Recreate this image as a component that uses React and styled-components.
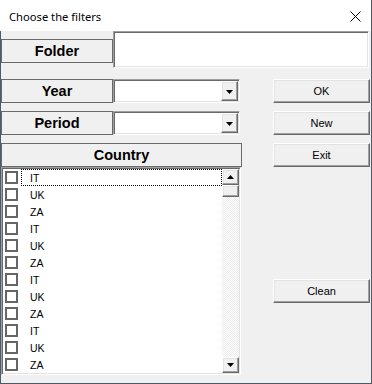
import React from "react";
import styled, { createGlobalStyle } from "styled-components";

const countries = ["IT", "UK", "ZA", "IT", "UK", "ZA", "IT", "UK", "ZA", "IT", "UK", "ZA"];

function DownArrow() {
  return (
    <svg width="7" height="4" viewBox="0 0 7 4">
      <path d="M0 0 H7 L3.5 4 Z" fill="#000" />
    </svg>
  );
}

function UpArrow() {
  return (
    <svg width="7" height="4" viewBox="0 0 7 4">
      <path d="M0 4 H7 L3.5 0 Z" fill="#000" />
    </svg>
  );
}

function CloseIcon() {
  return (
    <svg width="11" height="11" viewBox="0 0 11 11">
      <path d="M0.5 0.5 L10.5 10.5 M10.5 0.5 L0.5 10.5" stroke="#000" strokeWidth="1" fill="none" />
    </svg>
  );
}

function Combo() {
  return (
    <ComboBox>
      <DropButton>
        <DownArrow />
      </DropButton>
    </ComboBox>
  );
}

function App() {
  return (
    <>
      <GlobalStyle />
      <Window>
        <TitleBar>
          <span>Choose the filters</span>
          <CloseIcon />
        </TitleBar>
        <Client>
          <FolderRow>
            <FieldLabel>Folder</FieldLabel>
            <TextBox />
          </FolderRow>
          <Main>
            <LeftColumn>
              <FieldRow>
                <FieldLabel>Year</FieldLabel>
                <Combo />
              </FieldRow>
              <FieldRow>
                <FieldLabel>Period</FieldLabel>
                <Combo />
              </FieldRow>
              <HeaderLabel>Country</HeaderLabel>
              <ListBox>
                <Items>
                  {countries.map((c, i) => (
                    <Item key={i}>
                      <Check />
                      <ItemText focused={i === 0}>{c}</ItemText>
                    </Item>
                  ))}
                </Items>
                <ScrollBar>
                  <ScrollButton>
                    <UpArrow />
                  </ScrollButton>
                  <Thumb />
                  <Track />
                  <ScrollButton>
                    <DownArrow />
                  </ScrollButton>
                </ScrollBar>
              </ListBox>
            </LeftColumn>
            <ButtonColumn>
              <Button>OK</Button>
              <Button>New</Button>
              <Button>Exit</Button>
              <Button spaced>Clean</Button>
            </ButtonColumn>
          </Main>
        </Client>
      </Window>
    </>
  );
}

const GlobalStyle = createGlobalStyle`
  html, body {
    margin: 0;
    padding: 0;
    background: #f0f0f0;
  }
  body {
    font-family: "Liberation Sans", Arial, sans-serif;
  }
`;

const Window = styled.div`
  width: 372px;
  height: 384px;
  box-sizing: border-box;
  display: flex;
  flex-direction: column;
  background: #f0f0f0;
  border-right: 1px solid #4f5a66;
  border-bottom: 1px solid #4f5a66;
  overflow: hidden;
`;

const TitleBar = styled.div`
  height: 31px;
  flex-shrink: 0;
  background: #fff;
  display: flex;
  align-items: center;
  justify-content: space-between;
  padding: 1px 10px 0 9px;
  box-sizing: border-box;
  font-family: "Noto Sans", "Open Sans", sans-serif;
  font-size: 11.2px;
  color: #000;
`;

const Client = styled.div`
  flex: 1;
  border-left: 1px solid #4f5a66;
  display: flex;
  flex-direction: column;
`;

const FolderRow = styled.div`
  display: flex;
  align-items: flex-start;
  height: 37px;
`;

const FieldLabel = styled.div`
  width: 112px;
  height: 24px;
  box-sizing: border-box;
  border: 1px solid #6a6a6a;
  display: flex;
  align-items: center;
  justify-content: center;
  font-weight: bold;
  font-size: 14.5px;
  color: #000;
  ${FolderRow} & {
    margin-top: 8px;
  }
`;

const sunken = `
  box-sizing: border-box;
  border: 1px solid;
  border-color: #a0a0a0 #fff #fff #a0a0a0;
  box-shadow: inset 1px 1px #696969, inset -1px -1px #e3e3e3;
  background: #fff;
`;

const raised = `
  box-sizing: border-box;
  border: 1px solid;
  border-color: #fff #696969 #696969 #fff;
  box-shadow: inset -1px -1px #a0a0a0, inset 1px 1px #e3e3e3;
  background: #f0f0f0;
`;

const TextBox = styled.div`
  ${sunken}
  width: 256px;
  height: 37px;
`;

const Main = styled.div`
  display: flex;
  margin-top: 11px;
`;

const LeftColumn = styled.div`
  width: 241px;
  display: flex;
  flex-direction: column;
`;

const FieldRow = styled.div`
  display: flex;
  margin-bottom: 8px;
`;

const ComboBox = styled.div`
  ${sunken}
  width: 127px;
  height: 24px;
  display: flex;
  justify-content: flex-end;
  align-items: center;
  padding: 1px 1px 1px 0;
`;

const DropButton = styled.div`
  ${raised}
  width: 17px;
  height: 20px;
  display: flex;
  align-items: center;
  justify-content: center;
  padding-top: 1px;
`;

const HeaderLabel = styled.div`
  width: 241px;
  height: 24px;
  box-sizing: border-box;
  border: 1px solid #6a6a6a;
  display: flex;
  align-items: center;
  justify-content: center;
  font-weight: bold;
  font-size: 14.5px;
  color: #000;
`;

const ListBox = styled.div`
  ${sunken}
  width: 240px;
  height: 208px;
  padding: 1px;
  display: flex;
`;

const Items = styled.div`
  flex: 1;
  display: flex;
  flex-direction: column;
`;

const Item = styled.div`
  height: 17px;
  display: flex;
  align-items: center;
  font-size: 10.5px;
  color: #000;
`;

const Check = styled.span`
  width: 13px;
  height: 13px;
  box-sizing: border-box;
  border: 2px solid #666;
  background: #fff;
  margin-left: 2px;
  margin-right: 3px;
  flex-shrink: 0;
`;

const ItemText = styled.span`
  flex: 1;
  height: 17px;
  box-sizing: border-box;
  display: flex;
  align-items: center;
  padding-left: 8px;
  border: 1px ${(p) => (p.focused ? "dotted #000" : "solid transparent")};
`;

const ScrollBar = styled.div`
  width: 17px;
  display: flex;
  flex-direction: column;
`;

const ScrollButton = styled.div`
  ${raised}
  height: 16px;
  display: flex;
  align-items: center;
  justify-content: center;
`;

const Thumb = styled.div`
  ${raised}
  height: 12px;
`;

const Track = styled.div`
  flex: 1;
  background-color: #fff;
  background-image: repeating-conic-gradient(#ececec 0 25%, #fff 0 50%);
  background-size: 2px 2px;
`;

const ButtonColumn = styled.div`
  margin-left: 31px;
  width: 97px;
  display: flex;
  flex-direction: column;
  gap: 8px;
`;

const Button = styled.div`
  ${raised}
  height: 24px;
  display: flex;
  align-items: center;
  justify-content: center;
  font-size: 11px;
  color: #000;
  margin-top: ${(p) => (p.spaced ? "104px" : "0")};
`;

export default App;
